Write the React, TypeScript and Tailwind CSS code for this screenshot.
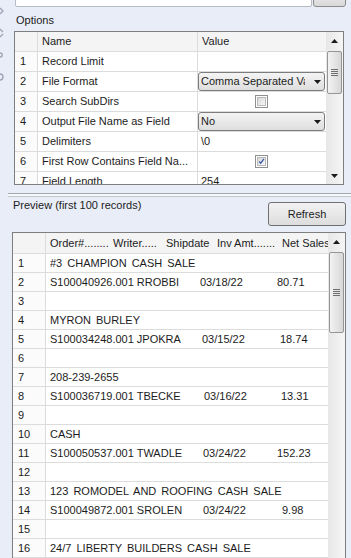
import React from "react";

type OptionValue =
  | { kind: "none" }
  | { kind: "text"; text: string }
  | { kind: "select"; text: string }
  | { kind: "check"; checked: boolean };

const options: { n: number; name: string; value: OptionValue }[] = [
  { n: 1, name: "Record Limit", value: { kind: "none" } },
  { n: 2, name: "File Format", value: { kind: "select", text: "Comma Separated Values" } },
  { n: 3, name: "Search SubDirs", value: { kind: "check", checked: false } },
  { n: 4, name: "Output File Name as Field", value: { kind: "select", text: "No" } },
  { n: 5, name: "Delimiters", value: { kind: "text", text: "\\0" } },
  { n: 6, name: "First Row Contains Field Na...", value: { kind: "check", checked: true } },
  { n: 7, name: "Field Length", value: { kind: "text", text: "254" } },
];

type PreviewRow = {
  n: number;
  text?: string;
  order?: string;
  date?: string;
  amt?: string;
  orderW?: string;
  dateW?: string;
};

const preview: PreviewRow[] = [
  { n: 1, text: "#3 CHAMPION CASH SALE" },
  { n: 2, order: "S100040926.001 RROBBI", date: "03/18/22", amt: "80.71", orderW: "w-[150px]", dateW: "w-[77px]" },
  { n: 3 },
  { n: 4, text: "MYRON BURLEY" },
  { n: 5, order: "S100034248.001 JPOKRA", date: "03/15/22", amt: "18.74", orderW: "w-[152px]", dateW: "w-[78px]" },
  { n: 6 },
  { n: 7, text: "208-239-2655" },
  { n: 8, order: "S100036719.001 TBECKE", date: "03/16/22", amt: "13.31", orderW: "w-[154px]", dateW: "w-[77px]" },
  { n: 9 },
  { n: 10, text: "CASH" },
  { n: 11, order: "S100050537.001 TWADLE", date: "03/24/22", amt: "152.23", orderW: "w-[153px]", dateW: "w-[74px]" },
  { n: 12 },
  { n: 13, text: "123 ROMODEL AND ROOFING CASH SALE" },
  { n: 14, order: "S100049872.001 SROLEN", date: "03/24/22", amt: "9.98", orderW: "w-[153px]", dateW: "w-[79px]" },
  { n: 15 },
  { n: 16, text: "24/7 LIBERTY BUILDERS CASH SALE" },
  { n: 17 },
];

function Arrow({ up }: { up?: boolean }) {
  return (
    <svg width="7" height="4" viewBox="0 0 7 4">
      <path d={up ? "M0 4h7L3.5 0z" : "M0 0h7L3.5 4z"} fill="#1b1b1b" />
    </svg>
  );
}

function Thumb({ className }: { className: string }) {
  return (
    <div
      className={`mx-[1px] flex items-center justify-center rounded-[2px] border border-[#959595] bg-linear-to-r from-[#f3f3f3] to-[#d7d7d7] ${className}`}
    >
      <div className="flex flex-col gap-[1px]">
        <div className="h-[1px] w-[7px] bg-[#6f6f6f]" />
        <div className="h-[1px] w-[7px] bg-[#6f6f6f]" />
        <div className="h-[1px] w-[7px] bg-[#6f6f6f]" />
        <div className="h-[1px] w-[7px] bg-[#6f6f6f]" />
      </div>
    </div>
  );
}

function Dropdown({ text }: { text: string }) {
  return (
    <div className="flex h-full items-center rounded-[3px] border border-[#7c7c7c] bg-linear-to-b from-[#f4f4f4] to-[#dedede]">
      <span className="w-[106px] overflow-hidden whitespace-nowrap pl-[2px]">{text}</span>
      <span className="ml-auto mr-[3px] flex">
        <Arrow />
      </span>
    </div>
  );
}

function CheckBox({ checked }: { checked: boolean }) {
  return (
    <div className="flex h-[13px] w-[13px] items-center justify-center border border-[#8e8f8f] bg-white">
      <div className="flex h-[9px] w-[9px] items-center justify-center border border-[#b9b9b9] bg-linear-to-br from-[#d9d9d9] to-[#f7f7f7]">
        {checked && (
          <svg width="9" height="9" viewBox="0 0 9 9">
            <path d="M1.5 4.5l2 2.2L7.6 1.2" stroke="#3a57a8" strokeWidth="1.6" fill="none" />
          </svg>
        )}
      </div>
    </div>
  );
}

function StripIcon({ d }: { d: string }) {
  return (
    <svg width="8" height="10" viewBox="0 0 8 10">
      <path d={d} stroke="#9ea6b6" strokeWidth="1.4" fill="none" />
    </svg>
  );
}

export default function App() {
  return (
    <div className="h-[558px] w-[351px] overflow-hidden bg-[#e9edf7] font-['Liberation_Sans',Arial,sans-serif] text-[11px] leading-[13px] text-[#1c1c1c]">
      {/* upper: options */}
      <div className="flex">
        <div className="flex w-[14px] flex-col gap-[12px] pt-[6px]">
          <StripIcon d="M0 2l3 3-3 3" />
          <StripIcon d="M0 1l3 3M0 9l3-3" />
          <StripIcon d="M0 3c3 0 3 4 0 4" />
          <StripIcon d="M0 2c4 0 4 6 0 6" />
        </div>
        <div className="flex w-[337px] flex-col">
          <div className="flex h-[7px] items-end gap-[1px] pl-[1px]">
            <div className="h-[20px] w-[297px] rounded-[2px] border border-[#b7bac2] bg-white" />
            <div className="h-[20px] w-[33px] rounded-[3px] border border-[#8b8b8b] bg-linear-to-b from-[#f2f2f2] to-[#d9d9d9]" />
          </div>
          <div className="mt-[7px] pl-[2px]">Options</div>
          <div className="mt-[4px] flex h-[154px] w-[330px] overflow-hidden border border-[#7e7e7e] bg-white">
            <div className="flex w-[311px] flex-col">
              <div className="flex h-[20px] shrink-0 border-b border-[#dcdcdc] bg-[#f4f4f4]">
                <div className="w-[23px] border-r border-[#dcdcdc]" />
                <div className="flex w-[160px] items-center border-r border-[#dcdcdc] pl-[4px]">Name</div>
                <div className="flex w-[128px] items-center pl-[4px]">Value</div>
              </div>
              {options.map((o) => (
                <div key={o.n} className="flex h-[20px] shrink-0 border-b border-[#dcdcdc]">
                  <div className="flex w-[23px] items-center border-r border-[#dcdcdc] bg-[#fbfbfb] pl-[5px]">{o.n}</div>
                  <div className="flex w-[160px] items-center overflow-hidden whitespace-nowrap border-r border-[#dcdcdc] pl-[4px]">
                    {o.name}
                  </div>
                  <div className="flex w-[128px] items-center">
                    {o.value.kind === "text" && <span className="pl-[3px]">{o.value.text}</span>}
                    {o.value.kind === "select" && (
                      <div className="h-full w-[127px]">
                        <Dropdown text={o.value.text} />
                      </div>
                    )}
                    {o.value.kind === "check" && (
                      <div className="flex w-full justify-center pr-[2px]">
                        <CheckBox checked={o.value.checked} />
                      </div>
                    )}
                  </div>
                </div>
              ))}
            </div>
            <div className="flex w-[17px] flex-col bg-linear-to-r from-[#e7e7e7] to-[#f5f5f5]">
              <div className="flex h-[17px] items-center justify-center">
                <Arrow up />
              </div>
              <Thumb className="mt-[2px] h-[43px]" />
              <div className="mt-auto flex h-[17px] items-center justify-center">
                <Arrow />
              </div>
            </div>
          </div>
        </div>
      </div>

      {/* splitter */}
      <div className="ml-[8px] mt-[8px] h-[4px] border-y border-t-[#a3a7b0] border-b-[#c3c7d0] bg-[#f7f8fb]" />

      {/* preview header */}
      <div className="flex pl-[13px] pr-[5px]">
        <div className="mt-[2px]">Preview (first 100 records)</div>
        <div className="ml-auto mt-[5px] flex h-[24px] w-[78px] items-center justify-center rounded-[3px] border border-[#707070] bg-linear-to-b from-[#f2f2f2] to-[#dddddd]">
          Refresh
        </div>
      </div>

      {/* preview grid */}
      <div className="ml-[12px] mt-[6px] flex w-[334px] border border-[#7e7e7e] bg-white">
        <div className="flex w-[315px] flex-col">
          <div className="flex h-[21px] shrink-0 border-b border-[#dcdcdc] bg-[#f4f4f4]">
            <div className="w-[33px] border-r border-[#dcdcdc]" />
            <div className="flex flex-1 items-center overflow-hidden whitespace-nowrap pl-[4px]">
              <span className="w-[63px] shrink-0">Order#........</span>
              <span className="w-[53px] shrink-0">Writer.....</span>
              <span className="w-[51px] shrink-0">Shipdate</span>
              <span className="w-[65px] shrink-0">Inv Amt.......</span>
              <span className="shrink-0">Net Sales</span>
            </div>
          </div>
          {preview.map((r) => (
            <div key={r.n} className="flex h-[19px] shrink-0 border-b border-[#dcdcdc]">
              <div className="flex w-[33px] items-center border-r border-[#dcdcdc] bg-[#fbfbfb] pl-[5px]">{r.n}</div>
              <div className="flex flex-1 items-center overflow-hidden whitespace-nowrap pl-[4px]">
                {r.text && <span className="[word-spacing:2px]">{r.text}</span>}
                {r.order && (
                  <>
                    <span className={`${r.orderW} shrink-0`}>{r.order}</span>
                    <span className={`${r.dateW} shrink-0`}>{r.date}</span>
                    <span className="shrink-0">{r.amt}</span>
                  </>
                )}
              </div>
            </div>
          ))}
        </div>
        <div className="flex w-[17px] flex-col bg-linear-to-r from-[#e7e7e7] to-[#f5f5f5]">
          <div className="flex h-[17px] items-center justify-center">
            <Arrow up />
          </div>
          <Thumb className="mt-[2px] h-[81px]" />
        </div>
      </div>
    </div>
  );
}
